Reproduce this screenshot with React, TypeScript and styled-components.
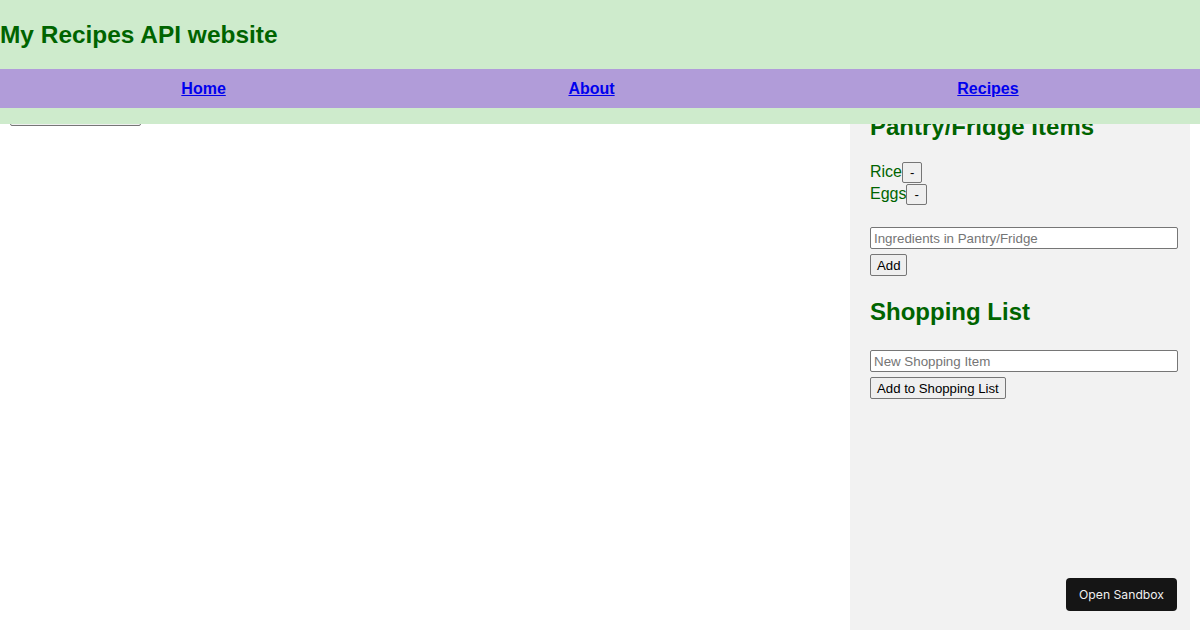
import React from "react";
import styled, { createGlobalStyle } from "styled-components";

const green = "#006400";
const headerGreen = "#ceebcc";
const purple = "#b19cd9";

const GlobalStyle = createGlobalStyle`
  body {
    margin: 0;
    font-family: "Liberation Sans", Arial, sans-serif;
    background: white;
  }
`;

const Header = styled.header`
  position: fixed;
  top: 0;
  left: 0;
  width: 100%;
  background-color: ${headerGreen};
  padding-bottom: 16px;
  z-index: 10;
`;

const Title = styled.h1`
  margin: 0;
  padding: 20px 0;
  font-size: 24.45px;
  line-height: 29px;
  color: ${green};
`;

const Nav = styled.nav`
  background-color: ${purple};
  height: 39px;
  padding: 0 10px;
`;

const NavList = styled.ul`
  list-style: none;
  margin: 0;
  padding: 0;
  height: 100%;
  display: flex;
  align-items: center;
`;

const NavItem = styled.li`
  flex: 1 1 auto;
  text-align: center;
`;

const NavLink = styled.a`
  color: #0000ee;
  font-weight: bold;
  font-size: 16px;
  text-decoration: underline;
`;

const Main = styled.main`
  display: flex;
  align-items: flex-start;
  padding-top: 73px;
`;

const LeftPane = styled.section`
  flex: 1;
  padding: 31px 10px 10px;
`;

const Button = styled.button<{ $width?: number }>`
  box-sizing: border-box;
  height: 22px;
  font-family: "Liberation Sans", Arial, sans-serif;
  font-size: 13.2px;
  line-height: 15px;
  color: black;
  background-color: #efefef;
  border: 1px solid #767676;
  border-radius: 2px;
  padding: 1px 6px;
  ${(p) => (p.$width ? `width: ${p.$width}px;` : "")}
`;

const Sidebar = styled.aside`
  width: 300px;
  padding: 20px;
  margin-right: 10px;
  background-color: #f2f2f2;
  min-height: 600px;
`;

const SectionTitle = styled.h2<{ $top?: number }>`
  margin: ${(p) => p.$top ?? 20}px 0 20px;
  font-size: 24px;
  line-height: 28px;
  color: ${green};
`;

const ItemList = styled.ul`
  list-style: none;
  margin: 0 0 22px;
  padding: 0;
`;

const Item = styled.li`
  color: ${green};
  font-size: 16px;
  line-height: 22px;
  height: 22px;
  display: flex;
  align-items: center;
`;

const SmallButton = styled(Button)`
  height: 21px;
  padding: 1px 7px;
`;

const Input = styled.input`
  box-sizing: border-box;
  display: block;
  width: 308px;
  height: 22px;
  padding: 1px 3px;
  font-family: "Liberation Sans", Arial, sans-serif;
  font-size: 13.33px;
  border: 1px solid #767676;
  border-radius: 2px;
  background: white;
  margin-bottom: 5px;
  &::placeholder {
    color: #757575;
  }
`;

const ShoppingForm = styled.div`
  margin-top: 24px;
`;

const SandboxButton = styled.a`
  position: fixed;
  right: 23px;
  bottom: 19px;
  background-color: #151515;
  color: #f0f0f0;
  font-family: Inter, "Liberation Sans", sans-serif;
  font-size: 12.2px;
  line-height: 33px;
  height: 33px;
  padding: 0 13px;
  border-radius: 4px;
  text-decoration: none;
  z-index: 20;
`;

export default function App() {
  const pantry = ["Rice", "Eggs"];
  return (
    <>
      <GlobalStyle />
      <Header>
        <Title>My Recipes API website</Title>
        <Nav>
          <NavList>
            <NavItem>
              <NavLink href="#">Home</NavLink>
            </NavItem>
            <NavItem>
              <NavLink href="#">About</NavLink>
            </NavItem>
            <NavItem>
              <NavLink href="#">Recipes</NavLink>
            </NavItem>
          </NavList>
        </Nav>
      </Header>
      <Main>
        <LeftPane>
          <Button $width={131}>Get Recipes</Button>
        </LeftPane>
        <Sidebar>
          <SectionTitle>Pantry/Fridge Items</SectionTitle>
          <ItemList>
            {pantry.map((p) => (
              <Item key={p}>
                {p}
                <SmallButton>-</SmallButton>
              </Item>
            ))}
          </ItemList>
          <Input placeholder="Ingredients in Pantry/Fridge" />
          <Button>Add</Button>
          <SectionTitle $top={22}>Shopping List</SectionTitle>
          <ShoppingForm>
            <Input placeholder="New Shopping Item" />
            <Button>Add to Shopping List</Button>
          </ShoppingForm>
        </Sidebar>
      </Main>
      <SandboxButton href="#">Open Sandbox</SandboxButton>
    </>
  );
}
